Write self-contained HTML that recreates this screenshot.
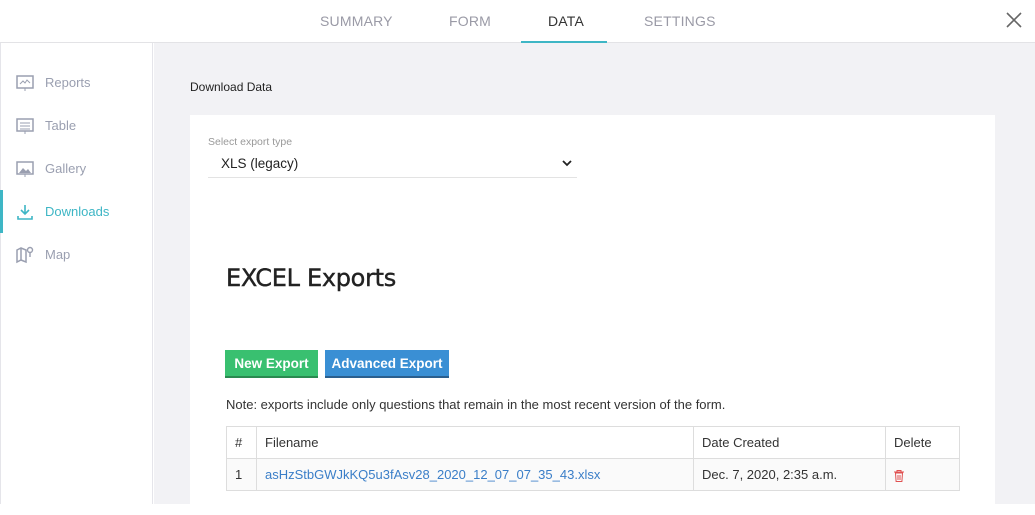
<!DOCTYPE html>
<html><head><style>
*{margin:0;padding:0;box-sizing:border-box}
body{width:1035px;height:504px;overflow:hidden;background:#fff;font-family:"Liberation Sans",sans-serif;position:relative}
.top{position:absolute;left:0;top:0;width:1035px;height:43px;border-bottom:1px solid #e3e3e6;background:#fff}
.tab{position:absolute;top:13px;font-size:14px;color:#9a9aa6;letter-spacing:.2px}
.side{position:absolute;left:0;top:43px;width:153px;height:461px;background:#fff;border-right:1px solid #e5e5ea;border-left:1px solid #e5e5ea}
.item{position:absolute;left:44px;font-size:13px;color:#9a9fb0}
.ico{position:absolute;left:15px;width:18px;height:16px}
.main{position:absolute;left:154px;top:43px;width:881px;height:461px;background:#f2f2f5}
.card{position:absolute;left:190px;top:115px;width:805px;height:400px;background:#fff}
.btn{position:absolute;top:350px;height:28px;color:#fff;font-size:13.5px;font-weight:bold;line-height:27px;text-align:center;font-family:"Liberation Sans Narrow","Liberation Sans",sans-serif}
table{position:absolute;left:226px;top:426px;width:734px;border-collapse:collapse;font-size:13px;color:#333;font-family:"Liberation Sans Narrow","Liberation Sans",sans-serif}
td{border:1px solid #ddd;padding:0 8px;height:32px}
</style></head><body>
<div class="top">
<span class="tab" style="left:320px">SUMMARY</span>
<span class="tab" style="left:449px">FORM</span>
<span class="tab" style="left:548px;color:#333">DATA</span>
<div style="position:absolute;left:521px;top:41px;width:86px;height:2px;background:#3eb6c5"></div>
<span class="tab" style="left:644px">SETTINGS</span>
<svg style="position:absolute;left:1006px;top:12px" width="16" height="16"><path d="M1 1L15 15M15 1L1 15" stroke="#666" stroke-width="1.6"/></svg>
</div>
<div class="side">
<svg class="ico" style="top:32px" viewBox="0 0 18 16"><rect x="1" y="1" width="16" height="12" fill="none" stroke="#9a9fb0" stroke-width="1.5"/><path d="M4 9l3-3 2 2 2-3 3 3M9 13v3" stroke="#9a9fb0" fill="none"/></svg>
<span class="item" style="top:32px">Reports</span>
<svg class="ico" style="top:75px" viewBox="0 0 18 16"><rect x="1" y="1" width="16" height="12" fill="none" stroke="#9a9fb0" stroke-width="1.5"/><path d="M4 5h10M4 8h10M4 11h10M9 13v3" stroke="#9a9fb0"/></svg>
<span class="item" style="top:75px">Table</span>
<svg class="ico" style="top:118px" viewBox="0 0 18 16"><rect x="1" y="1" width="16" height="12" fill="none" stroke="#9a9fb0" stroke-width="1.5"/><path d="M3 12l4-5 3 3 2-2 3 4z" fill="#9a9fb0"/><path d="M9 13v3" stroke="#9a9fb0"/></svg>
<span class="item" style="top:118px">Gallery</span>
<div style="position:absolute;left:-1px;top:147px;width:3px;height:43px;background:#3eb6c5"></div>
<svg class="ico" style="top:161px" viewBox="0 0 18 16"><path d="M9 1v9M5 6l4 4 4-4M2 12v3h14v-3" stroke="#3eb6c5" stroke-width="1.6" fill="none"/></svg>
<span class="item" style="top:161px;color:#3eb6c5">Downloads</span>
<svg class="ico" style="top:203px;height:18px" viewBox="0 0 18 18"><path d="M1 4l4-2 5 2 0 12-5-2-4 2zM5 2v12" stroke="#9a9fb0" stroke-width="1.5" fill="none"/><circle cx="14" cy="4" r="2.5" stroke="#9a9fb0" fill="none" stroke-width="1.4"/><path d="M14 7v4" stroke="#9a9fb0" stroke-width="1.4"/></svg>
<span class="item" style="top:204px">Map</span>
</div>
<div class="main"></div>
<div style="position:absolute;left:190px;top:80px;font-size:12px;color:#222">Download Data</div>
<div class="card"></div>
<div style="position:absolute;left:208px;top:136px;font-size:10.5px;color:#999">Select export type</div>
<div style="position:absolute;left:208px;top:150px;width:369px;height:28px;border-bottom:1px solid #e3e3e3;font-size:13.5px;color:#222;padding:6px 13px">XLS (legacy)
<svg style="position:absolute;right:5px;top:10px" width="10" height="7"><path d="M1 1l4 4 4-4" stroke="#222" stroke-width="1.8" fill="none"/></svg></div>
<div style="position:absolute;left:226px;top:264px;font-size:24px;color:#222;font-family:'DejaVu Sans',sans-serif;font-weight:500;letter-spacing:-.3px;-webkit-text-stroke:.4px #222">EXCEL Exports</div>
<div class="btn" style="left:225px;width:93px;background:#39c070;border-bottom:2px solid #2a8a50">New Export</div>
<div class="btn" style="left:325px;width:124px;background:#3a8fd4;border-bottom:2px solid #2b5f8e">Advanced Export</div>
<div style="position:absolute;left:226px;top:397px;font-size:13px;color:#333;font-family:'Liberation Sans Narrow','Liberation Sans',sans-serif">Note: exports include only questions that remain in the most recent version of the form.</div>
<table>
<tr><td style="width:30px">#</td><td>Filename</td><td style="width:192px">Date Created</td><td style="width:74px">Delete</td></tr>
<tr style="background:#fafafa"><td>1</td><td style="color:#3a7ec8">asHzStbGWJkKQ5u3fAsv28_2020_12_07_07_35_43.xlsx</td><td>Dec. 7, 2020, 2:35 a.m.</td><td><svg style="display:block;margin-top:2px" width="10" height="12" viewBox="0 0 10 12"><path d="M0 2h10M3 2V0.5h4V2M1.5 3h7l-.6 8.5h-5.8z" stroke="#e05050" fill="none"/><path d="M4 5v5M6 5v5" stroke="#e05050"/></svg></td></tr>
</table>
</body></html>
